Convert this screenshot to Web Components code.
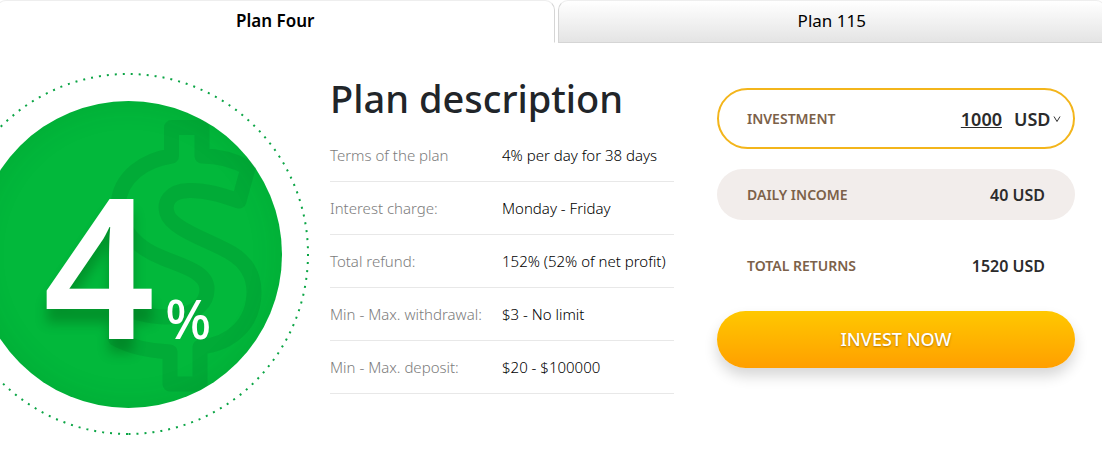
<!DOCTYPE html>
<html lang="en">
<head>
<meta charset="utf-8">
<meta name="viewport" content="width=device-width, initial-scale=1">
<title>Investment plans</title>
<style>
  body {
    margin: 0;
    background: #fff;
    color: #212529;
    font-family: "Noto Sans", "Open Sans", sans-serif;
    overflow-x: hidden;
  }
</style>
</head>
<body>
<plan-tabs>
  <plan-tab active>Plan Four</plan-tab>
  <plan-tab>Plan 115</plan-tab>
</plan-tabs>
<plan-panel>
  <plan-badge slot="badge" percent="4"></plan-badge>
  <plan-description slot="description"></plan-description>
  <invest-form slot="form" rate="4" days="38"></invest-form>
</plan-panel>

<script>
const template = (html) => {
  const el = document.createElement('template');
  el.innerHTML = html;
  return el;
};

class BaseElement extends HTMLElement {
  constructor () {
    super();
    this.attachShadow({ mode: 'open' });
    this.shadowRoot.appendChild(this.constructor.template.content.cloneNode(true));
  }

  $(selector) {
    return this.shadowRoot.querySelector(selector);
  }
}

class PlanTabs extends BaseElement {
  static template = template(/* html */ `
    <style>
      :host {
        display: block;
      }
      nav {
        display: flex;
        gap: 3px;
        /* the outer tab edges stay out of view */
        margin: 0 -4px;
      }
    </style>
    <nav><slot></slot></nav>
  `);
}

class PlanTab extends BaseElement {
  static template = template(/* html */ `
    <style>
      :host {
        display: block;
        flex: 1 1 auto;
      }
      button {
        display: block;
        box-sizing: border-box;
        width: 100%;
        height: 43px;
        padding: 0 0 2px;
        border: 1px solid #d5d5d5;
        border-top-color: #eee;
        border-radius: 10px 10px 0 0;
        background: linear-gradient(#fff, #e4e4e4);
        color: #000;
        font: 400 17px/24px "Noto Sans", sans-serif;
        cursor: pointer;
      }
      /* the open tab runs into the panel below it */
      :host([active]) button {
        border-left-color: transparent;
        border-bottom-color: transparent;
        background: #fff;
        font-weight: 600;
      }
    </style>
    <button type="button"><slot></slot></button>
  `);
}

class PlanPanel extends BaseElement {
  static template = template(/* html */ `
    <style>
      :host {
        display: flex;
        align-items: flex-start;
        padding: 30px 27px 20px 0;
      }
      .badge {
        flex: none;
        /* the ring bleeds off the left edge */
        margin-left: -53px;
        margin-right: 20px;
      }
      .description {
        flex: 344 1 0;
        margin-right: 43px;
      }
      .form {
        flex: 358 1 0;
        padding-top: 15px;
      }
    </style>
    <div class="badge"><slot name="badge"></slot></div>
    <div class="description"><slot name="description"></slot></div>
    <div class="form"><slot name="form"></slot></div>
  `);
}

class PlanBadge extends BaseElement {
  static template = template(/* html */ `
    <style>
      :host {
        display: grid;
        grid-template: 363px / 363px;
      }
      svg, .disc, .rate {
        grid-area: 1 / 1;
      }
      .disc {
        place-self: center;
        width: 307px;
        height: 307px;
        border-radius: 50%;
        background: #02b83b;
        box-shadow: inset 0 0 32px rgba(0, 60, 0, 0.1);
      }
      svg {
        display: block;
        width: 363px;
        height: 363px;
        z-index: 1;
      }
      .rate {
        z-index: 2;
        align-self: start;
        display: flex;
        align-items: baseline;
        padding-left: 96px;
        color: #fff;
        font-weight: 600;
        text-shadow: 0 14px 12px rgba(0, 50, 0, 0.28);
      }
      .number {
        font-size: 196px;
        line-height: 380px;
      }
      .sign {
        margin-left: 10px;
        font-size: 54px;
        font-weight: 500;
        line-height: 64px;
        text-shadow: none;
      }
    </style>
    <div class="disc"></div>
    <svg viewBox="0 0 363 363" fill="none" aria-hidden="true">
      <defs>
        <clipPath id="disc"><circle cx="181" cy="181" r="154"/></clipPath>
      </defs>
      <circle cx="181" cy="181" r="180" stroke="#0ba545" stroke-width="2" stroke-dasharray="2 6" transform="rotate(90 181 181)"/>
      <g clip-path="url(#disc)">
        <path transform="translate(53 -73)" stroke="#003c14" stroke-opacity="0.1" stroke-width="15" stroke-linejoin="round"
          d="M171.500 156V127.500H202V156C219 156 234 160 248 168L239 201C224 196 207 190 189 190.500C169 191 164 203 167 213C171 229 211 241 231 253C248 263 254 277 254 292C254 322 233 344 200 347V384H170V352C150 351 131 347 116 339L123 309C142 314 157 319 176 316C196 313 207 303 207 289C207 272 182 266 163 258C135 247 120 229 118 205C120 176 145 160 171.500 156Z"/>
      </g>
    </svg>
    <div class="rate"><span class="number"></span><span class="sign">%</span></div>
  `);

  connectedCallback () {
    this.$('.number').textContent = this.getAttribute('percent');
  }
}

const PLAN_TERMS = [
  ['Terms of the plan', '4% per day for 38 days'],
  ['Interest charge:', 'Monday - Friday'],
  ['Total refund:', '152% (52% of net profit)'],
  ['Min - Max. withdrawal:', '$3 - No limit'],
  ['Min - Max. deposit:', '$20 - $100000'],
];

class PlanDescription extends BaseElement {
  static template = template(/* html */ `
    <style>
      :host {
        display: block;
      }
      h1 {
        margin: 0 0 6px;
        font-size: 38px;
        font-weight: 500;
        line-height: 50px;
        white-space: nowrap;
      }
      table {
        width: 100%;
        border-collapse: separate;
        border-spacing: 0;
        font-size: 15px;
        line-height: 20px;
      }
      th, td {
        padding: 16px 0;
        border-bottom: 1px solid #e8e8e8;
        font-weight: 300;
        text-align: left;
        white-space: nowrap;
      }
      th {
        width: 50%;
        color: #7c7c7c;
      }
      td {
        color: #000;
      }
    </style>
    <h1>Plan description</h1>
    <table><tbody></tbody></table>
  `);

  connectedCallback () {
    this.$('tbody').innerHTML = PLAN_TERMS
      .map(([name, value]) => `<tr><th scope="row">${name}</th><td>${value}</td></tr>`)
      .join('');
  }
}

class InvestForm extends BaseElement {
  static template = template(/* html */ `
    <style>
      :host {
        display: block;
      }
      form {
        display: grid;
        gap: 20px;
      }
      .row {
        display: flex;
        align-items: center;
        justify-content: space-between;
        box-sizing: border-box;
        min-height: 51px;
        padding: 0 30px;
        border-radius: 31px;
        color: #2b2b2b;
      }
      .amount {
        min-height: 61px;
        padding: 0 12px 0 28px;
        border: 2px solid #f3b51b;
      }
      .income {
        background: #f2edeb;
      }
      label {
        color: #7c6149;
        font-size: 14px;
        font-weight: 600;
        line-height: 20px;
      }
      output {
        font-size: 16px;
        font-weight: 600;
        line-height: 20px;
      }
      .controls {
        display: flex;
        align-items: center;
      }
      input, select {
        margin: 0;
        padding: 0;
        border: 0;
        background: none;
        color: inherit;
        font: 600 18px/24px "Noto Sans", sans-serif;
        outline: 0;
      }
      input {
        width: 90px;
        margin-right: 12px;
        text-align: right;
        text-decoration: underline;
      }
      select {
        appearance: none;
      }
      svg {
        width: 8px;
        height: 8px;
        margin-left: 2px;
      }
      button {
        height: 57px;
        padding: 0 0 2px;
        border: 0;
        border-radius: 29px;
        background: linear-gradient(#ffc800, #ff9f00);
        box-shadow: 0 8px 14px rgba(0, 0, 0, 0.16);
        color: #fff;
        font: 500 18px/24px "Noto Sans", sans-serif;
        text-shadow: 0 1px 2px rgba(110, 60, 0, 0.5);
        cursor: pointer;
      }
    </style>
    <form>
      <div class="row amount">
        <label for="amount">INVESTMENT</label>
        <div class="controls">
          <input id="amount" type="text" inputmode="numeric" value="1000">
          <select id="currency" aria-label="Currency"><option>USD</option></select>
          <svg viewBox="0 0 8 8" fill="none" stroke="#333" aria-hidden="true"><path d="M1 1.500L4 6.500L7 1.500"/></svg>
        </div>
      </div>
      <div class="row income">
        <label for="income">DAILY INCOME</label>
        <output id="income"></output>
      </div>
      <div class="row">
        <label for="returns">TOTAL RETURNS</label>
        <output id="returns"></output>
      </div>
      <button type="submit">INVEST NOW</button>
    </form>
  `);

  connectedCallback () {
    this.$('#amount').addEventListener('input', () => this.update());
    this.$('form').addEventListener('submit', (event) => event.preventDefault());
    this.update();
  }

  update () {
    const amount = Number(this.$('#amount').value) || 0;
    const currency = this.$('#currency').value;
    const income = amount * Number(this.getAttribute('rate')) / 100;
    this.$('#income').value = `${income} ${currency}`;
    this.$('#returns').value = `${income * Number(this.getAttribute('days'))} ${currency}`;
  }
}

customElements.define('plan-tabs', PlanTabs);
customElements.define('plan-tab', PlanTab);
customElements.define('plan-panel', PlanPanel);
customElements.define('plan-badge', PlanBadge);
customElements.define('plan-description', PlanDescription);
customElements.define('invest-form', InvestForm);
</script>
</body>
</html>
